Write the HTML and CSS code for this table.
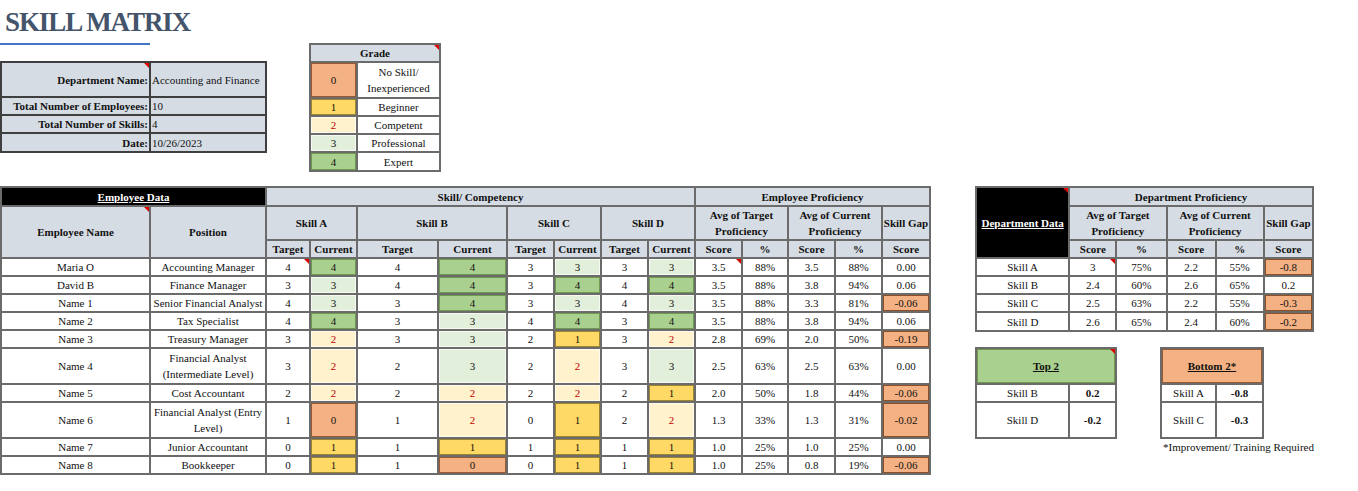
FILE: index.html
```html
<!DOCTYPE html>
<html lang="en">
<head>
<meta charset="utf-8">
<title>Skill Matrix</title>
<link rel="stylesheet" href="styles.css">
</head>
<body>
<div class="page">
  <div class="top">
    <div class="left-top">
      <h1 class="title">SKILL MATRIX</h1>
      <table class="sheet info">
        <colgroup><col class="ic1"><col class="ic2"></colgroup>
        <tr class="h33"><th class="note lbl">Department Name:</th><td class="val">Accounting and Finance</td></tr>
        <tr class="h16"><th class="lbl">Total Number of Employees:</th><td class="val">10</td></tr>
        <tr class="h16"><th class="lbl">Total Number of Skills:</th><td class="val">4</td></tr>
        <tr class="h17"><th class="lbl">Date:</th><td class="val">10/26/2023</td></tr>
      </table>
    </div>
    <table class="sheet grade">
      <colgroup><col class="gc1"><col class="gc2"></colgroup>
      <tr class="h16"><th colspan="2" class="hdr note">Grade</th></tr>
      <tr class="h34"><td class="g0">0</td><td>No Skill/<br>Inexperienced</td></tr>
      <tr class="h16"><td class="g1">1</td><td>Beginner</td></tr>
      <tr class="h16"><td class="g2">2</td><td>Competent</td></tr>
      <tr class="h16"><td class="g3">3</td><td>Professional</td></tr>
      <tr class="h17"><td class="g4">4</td><td>Expert</td></tr>
    </table>
  </div>

  <div class="bottom">
    <table class="sheet main">
      <colgroup>
        <col class="mc-name"><col class="mc-pos">
        <col class="mc-at"><col class="mc-ac">
        <col class="mc-bt"><col class="mc-bc">
        <col class="mc-ct"><col class="mc-cc">
        <col class="mc-dt"><col class="mc-dc">
        <col class="mc-ts"><col class="mc-tp">
        <col class="mc-cs"><col class="mc-cp">
        <col class="mc-gs">
      </colgroup>
      <tr class="h17">
        <th colspan="2" class="black">Employee Data</th>
        <th colspan="8" class="hdr">Skill/ Competency</th>
        <th colspan="5" class="hdr">Employee Proficiency</th>
      </tr>
      <tr class="h31">
        <th rowspan="2" class="hdr note">Employee Name</th>
        <th rowspan="2" class="hdr">Position</th>
        <th colspan="2" class="hdr">Skill A</th>
        <th colspan="2" class="hdr">Skill B</th>
        <th colspan="2" class="hdr">Skill C</th>
        <th colspan="2" class="hdr">Skill D</th>
        <th colspan="2" class="hdr">Avg of Target<br>Proficiency</th>
        <th colspan="2" class="hdr">Avg of Current<br>Proficiency</th>
        <th class="hdr">Skill Gap</th>
      </tr>
      <tr class="h16">
        <th class="hdr">Target</th><th class="hdr">Current</th>
        <th class="hdr">Target</th><th class="hdr">Current</th>
        <th class="hdr">Target</th><th class="hdr">Current</th>
        <th class="hdr">Target</th><th class="hdr">Current</th>
        <th class="hdr">Score</th><th class="hdr">%</th>
        <th class="hdr">Score</th><th class="hdr">%</th>
        <th class="hdr">Score</th>
      </tr>
      <tr class="h16"><td>Maria O</td><td>Accounting Manager</td><td class="note">4</td><td class="g4">4</td><td>4</td><td class="g4">4</td><td>3</td><td class="g3">3</td><td>3</td><td class="g3">3</td><td class="note">3.5</td><td>88%</td><td>3.5</td><td>88%</td><td>0.00</td></tr>
      <tr class="h16"><td>David B</td><td>Finance Manager</td><td>3</td><td class="g3">3</td><td>4</td><td class="g4">4</td><td>3</td><td class="g4">4</td><td>4</td><td class="g4">4</td><td>3.5</td><td>88%</td><td>3.8</td><td>94%</td><td>0.06</td></tr>
      <tr class="h16"><td>Name 1</td><td>Senior Financial Analyst</td><td>4</td><td class="g3">3</td><td>3</td><td class="g4">4</td><td>3</td><td class="g3">3</td><td>4</td><td class="g3">3</td><td>3.5</td><td>88%</td><td>3.3</td><td>81%</td><td class="neg">-0.06</td></tr>
      <tr class="h16"><td>Name 2</td><td>Tax Specialist</td><td>4</td><td class="g4">4</td><td>3</td><td class="g3">3</td><td>4</td><td class="g4">4</td><td>3</td><td class="g4">4</td><td>3.5</td><td>88%</td><td>3.8</td><td>94%</td><td>0.06</td></tr>
      <tr class="h16"><td>Name 3</td><td>Treasury Manager</td><td>3</td><td class="g2">2</td><td>3</td><td class="g3">3</td><td>2</td><td class="g1">1</td><td>3</td><td class="g2">2</td><td>2.8</td><td>69%</td><td>2.0</td><td>50%</td><td class="neg">-0.19</td></tr>
      <tr class="h34"><td>Name 4</td><td>Financial Analyst<br>(Intermediate Level)</td><td>3</td><td class="g2">2</td><td>2</td><td class="g3">3</td><td>2</td><td class="g2">2</td><td>3</td><td class="g3">3</td><td>2.5</td><td>63%</td><td>2.5</td><td>63%</td><td>0.00</td></tr>
      <tr class="h16"><td>Name 5</td><td>Cost Accountant</td><td>2</td><td class="g2">2</td><td>2</td><td class="g2">2</td><td>2</td><td class="g2">2</td><td>2</td><td class="g1">1</td><td>2.0</td><td>50%</td><td>1.8</td><td>44%</td><td class="neg">-0.06</td></tr>
      <tr class="h34"><td>Name 6</td><td>Financial Analyst (Entry<br>Level)</td><td>1</td><td class="g0">0</td><td>1</td><td class="g2">2</td><td>0</td><td class="g1">1</td><td>2</td><td class="g2">2</td><td>1.3</td><td>33%</td><td>1.3</td><td>31%</td><td class="neg">-0.02</td></tr>
      <tr class="h16"><td>Name 7</td><td>Junior Accountant</td><td>0</td><td class="g1">1</td><td>1</td><td class="g1">1</td><td>1</td><td class="g1">1</td><td>1</td><td class="g1">1</td><td>1.0</td><td>25%</td><td>1.0</td><td>25%</td><td>0.00</td></tr>
      <tr class="h16"><td>Name 8</td><td>Bookkeeper</td><td>0</td><td class="g1">1</td><td>1</td><td class="g0">0</td><td>0</td><td class="g1">1</td><td>1</td><td class="g1">1</td><td>1.0</td><td>25%</td><td>0.8</td><td>19%</td><td class="neg">-0.06</td></tr>
    </table>

    <div class="right">
      <table class="sheet dept">
        <colgroup>
          <col class="dc-name"><col class="dc-ts"><col class="dc-tp"><col class="dc-cs"><col class="dc-cp"><col class="dc-gs">
        </colgroup>
        <tr class="h17">
          <th rowspan="3" class="black note">Department Data</th>
          <th colspan="5" class="hdr">Department Proficiency</th>
        </tr>
        <tr class="h31">
          <th colspan="2" class="hdr">Avg of Target<br>Proficiency</th>
          <th colspan="2" class="hdr">Avg of Current<br>Proficiency</th>
          <th class="hdr">Skill Gap</th>
        </tr>
        <tr class="h16">
          <th class="hdr">Score</th><th class="hdr">%</th>
          <th class="hdr">Score</th><th class="hdr">%</th>
          <th class="hdr">Score</th>
        </tr>
        <tr class="h16"><td>Skill A</td><td class="note">3</td><td>75%</td><td>2.2</td><td>55%</td><td class="neg">-0.8</td></tr>
        <tr class="h16"><td>Skill B</td><td>2.4</td><td>60%</td><td>2.6</td><td>65%</td><td>0.2</td></tr>
        <tr class="h16"><td>Skill C</td><td>2.5</td><td>63%</td><td>2.2</td><td>55%</td><td class="neg">-0.3</td></tr>
        <tr class="h17"><td>Skill D</td><td>2.6</td><td>65%</td><td>2.4</td><td>60%</td><td class="neg">-0.2</td></tr>
      </table>

      <div class="summary">
        <table class="sheet rank top2">
          <colgroup><col class="tc1"><col class="tc2"></colgroup>
          <tr class="h34"><th colspan="2" class="green note"><u>Top 2</u></th></tr>
          <tr class="h16"><td>Skill B</td><td class="bold">0.2</td></tr>
          <tr class="h34"><td>Skill D</td><td class="bold">-0.2</td></tr>
        </table>
        <div class="bottom2">
          <table class="sheet rank">
            <colgroup><col class="bc1"><col class="bc2"></colgroup>
            <tr class="h34"><th colspan="2" class="orange"><u>Bottom 2*</u></th></tr>
            <tr class="h16"><td>Skill A</td><td class="bold">-0.8</td></tr>
            <tr class="h34"><td>Skill C</td><td class="bold">-0.3</td></tr>
          </table>
          <p class="footnote">*Improvement/ Training Required</p>
        </div>
      </div>
    </div>
  </div>
</div>
</body>
</html>
```

FILE: styles.css
```css
* { box-sizing: border-box; }

body {
  margin: 0;
  background: #ffffff;
  font-family: "Liberation Serif", "DejaVu Serif", serif;
  font-size: 11px;
  color: #111111;
}

.page { width: 1358px; }

.top {
  display: flex;
  align-items: flex-start;
  gap: 42px;
}

.title {
  margin: 0;
  width: 150px;
  padding: 4px 0 3px 5px;
  height: 45px;
  line-height: 36px;
  font-size: 27px;
  font-weight: bold;
  letter-spacing: -1.1px;
  white-space: nowrap;
  color: #44546a;
  border-bottom: 2px solid #4472c4;
}

/* generic spreadsheet table */
.sheet {
  border-collapse: separate;
  border-spacing: 2px;
  background: #6b6b6b;
  table-layout: fixed;
}
.sheet th, .sheet td {
  padding: 0 1px;
  background: #ffffff;
  text-align: center;
  vertical-align: middle;
  line-height: 16px;
  overflow: hidden;
  position: relative;
}
.sheet th { font-weight: bold; white-space: nowrap; padding: 0; }

.h16 { height: 16px; }
.h17 { height: 17px; }
.h31 { height: 31px; }
.h33 { height: 33px; }
.h34 { height: 34px; }

.hdr { background: #d6dce4 !important; color: #111111; }
.black { background: #000000 !important; color: #ffffff; text-decoration: underline; }
.green { background: #a9d08e !important; box-shadow: inset 0 0 0 1px #6e9a50; }
.orange { background: #f4b183 !important; box-shadow: inset 0 0 0 1px #9a5a30; }
.bold { font-weight: bold; }

/* comment marker */
.note::after {
  content: "";
  position: absolute;
  top: 0;
  right: 0;
  border-left: 5px solid transparent;
  border-top: 5px solid #e00000;
}

/* grade colours */
.g4 { background: #a9d08e !important; box-shadow: inset 0 0 0 1px #6e9a50; }
.g3 { background: #e2efda !important; box-shadow: inset 0 0 0 1px #f6faf3; }
.g2 { background: #fff2cc !important; color: #c00000; box-shadow: inset 0 0 0 1px #fffaf0; }
.g1 { background: #ffd966 !important; box-shadow: inset 0 0 0 1px #9c8530; }
.g0 { background: #f4b183 !important; box-shadow: inset 0 0 0 1px #9a5a30; }
.neg { background: #f4b183 !important; box-shadow: inset 0 0 0 1px #8c4f26; }

/* info table */
.info { margin-top: 16px; background: #3f3f3f; }
.info th, .info td { background: #d6dce4; }
.info .lbl { text-align: right; padding-right: 1px; }
.info .val { text-align: left; padding-left: 1px; white-space: nowrap; }
.ic1 { width: 147px; }
.ic2 { width: 114px; }

/* grade table */
.grade { margin-top: 43px; }
.gc1 { width: 45px; }
.gc2 { width: 81px; }

/* bottom area */
.bottom {
  display: flex;
  align-items: flex-start;
  gap: 44px;
  margin-top: 14px;
}

.mc-name { width: 147px; }
.mc-pos { width: 114px; }
.mc-at { width: 42px; }
.mc-ac { width: 45px; }
.mc-bt { width: 79px; }
.mc-bc { width: 67px; }
.mc-ct { width: 45px; }
.mc-cc { width: 45px; }
.mc-dt { width: 45px; }
.mc-dc { width: 45px; }
.mc-ts { width: 45px; }
.mc-tp { width: 44px; }
.mc-cs { width: 45px; }
.mc-cp { width: 45px; }
.mc-gs { width: 46px; }

.main td:nth-child(2) { white-space: nowrap; }

.right { display: flex; flex-direction: column; }

.dc-name { width: 91px; }
.dc-ts { width: 45px; }
.dc-tp { width: 48px; }
.dc-cs { width: 47px; }
.dc-cp { width: 46px; }
.dc-gs { width: 47px; }

.summary {
  display: flex;
  align-items: flex-start;
  gap: 43px;
  margin-top: 15px;
}
.tc1 { width: 91px; }
.tc2 { width: 45px; }
.bc1 { width: 53px; }
.bc2 { width: 45px; }

.footnote {
  margin: 1px 0 0 3px;
  white-space: nowrap;
  font-size: 11px;
  line-height: 14px;
}
```
